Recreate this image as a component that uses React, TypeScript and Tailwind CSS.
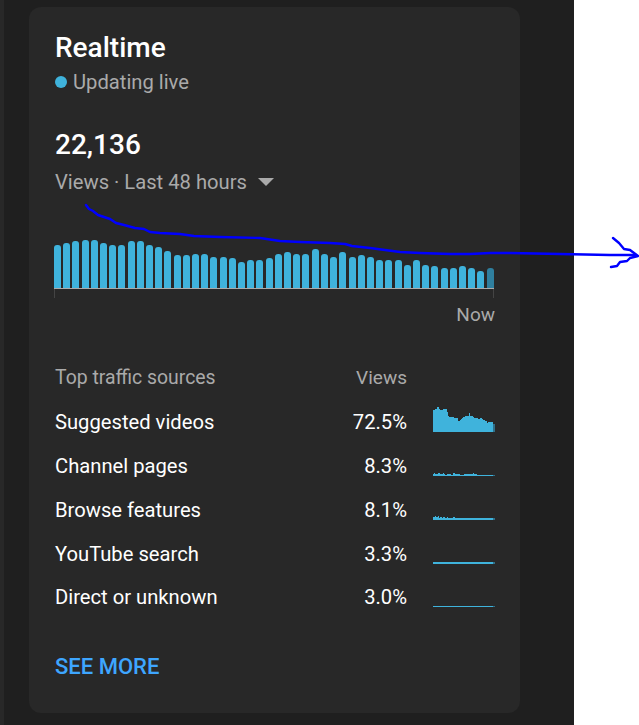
const heights = [43,45,47,48,48,45,43,43,47,47,43,41,37,33,33,34,34,31,31,30,26,28,28,30,34,36,34,34,39,34,31,36,31,33,31,28,28,28,23,28,23,22,20,20,22,20,17,20];

const expand = (runs: [number, number][]) => runs.flatMap(([v, n]) => Array<number>(n).fill(v));

const rows = [
  {
    name: "Suggested videos",
    pct: "72.5%",
    h: 26,
    dim: 8,
    spark: [22,22,23,23,25,25,23,22,22,22,23,23,23,23,20,16,15,15,15,15,15,14,14,14,14,11,11,12,13,14,15,15,16,16,16,16,19,16,16,16,15,14,14,14,14,13,13,14,14,13,12,12,11,11,9,10,10,10,10,10],
  },
  {
    name: "Channel pages",
    pct: "8.3%",
    h: 8,
    dim: 1,
    spark: expand([[2,1],[3,1],[2,3],[3,2],[2,3],[3,1],[2,1],[1,2],[2,4],[1,2],[3,2],[2,5],[1,4],[2,9],[3,1],[2,3],[1,16]]),
  },
  {
    name: "Browse features",
    pct: "8.1%",
    h: 8,
    dim: 2,
    spark: expand([[3,2],[4,1],[3,2],[4,1],[2,1],[3,2],[2,1],[3,2],[2,2],[3,1],[2,5],[3,2],[2,38]]),
  },
  { name: "YouTube search", pct: "3.3%", h: 8, dim: 2, spark: expand([[2,60]]) },
  { name: "Direct or unknown", pct: "3.0%", h: 8, dim: 1, spark: expand([[1,60]]) },
];

function Spark({ data, h, dim }: { data: number[]; h: number; dim: number }) {
  return (
    <svg width="62" height={h} viewBox={`0 0 62 ${h}`} shapeRendering="crispEdges" className="block">
      {data.map((v, i) => (
        <rect key={i} x={i} y={h - v} width="1" height={v} fill="#3fb3dc" />
      ))}
      <rect x="60" y={h - dim} width="2" height={dim} fill="#2f6f88" />
    </svg>
  );
}

export default function App() {
  return (
    <div className="relative w-[639px] h-[725px] overflow-hidden bg-white font-['Roboto',sans-serif]">
      <div className="w-[574px] h-full bg-[#1f1f1f] border-l-4 border-[#282828] pl-[25px] pt-[7px]">
        <div className="w-[491px] h-[706px] rounded-xl bg-[#282828] pl-[26px] pr-[25px] flex flex-col">
          <h1 className="mt-[25px] text-[28px] leading-[32px] font-medium text-white">Realtime</h1>
          <div className="mt-[6px] flex items-center h-[24px]">
            <span className="w-3 h-3 rounded-full bg-[#3fb3dc]" />
            <span className="ml-[6px] text-[20.2px] leading-[24px] text-[#aaaaaa]">Updating live</span>
          </div>
          <div className="mt-[35px] text-[28px] leading-[32px] font-medium text-white">22,136</div>
          <div className="mt-[9px] flex items-center h-[24px] text-[20.2px] leading-[24px] text-[#aaaaaa]">
            <span>Views · Last 48 hours</span>
            <span className="ml-[11px] w-0 h-0 border-x-[8px] border-x-transparent border-t-[8px] border-t-[#aaaaaa]" />
          </div>
          <div className="mt-[44px] -ml-px mr-px h-[50px] flex items-end justify-between border-b border-[#aaaaaa] box-content">
            {heights.map((v, i) => (
              <div
                key={i}
                className={i === 47 ? "w-[7px] rounded-t-[3px] bg-[#2f7f9e]" : "w-[7px] rounded-t-[3px] bg-[#3fb3dc]"}
                style={{ height: v }}
              />
            ))}
          </div>
          <div className="-ml-px mr-px flex justify-between h-[9px]">
            <span className="w-px bg-[#444444]" />
            <span className="w-px bg-[#444444]" />
          </div>
          <div className="mt-[5px] text-right text-[19px] leading-[24px] text-[#aaaaaa]">Now</div>
          <div className="mt-[39px] flex items-center h-[24px] text-[19.4px] leading-[24px] text-[#aaaaaa]">
            <span className="flex-1">Top traffic sources</span>
            <span className="mr-[88px] text-[19px]">Views</span>
          </div>
          <div className="mt-[10px] flex flex-col">
            {rows.map((r, i) => (
              <div key={r.name} className={i === 4 ? "-mt-px flex items-center h-[44px] text-[20.2px] text-white" : "flex items-center h-[44px] text-[20.2px] text-white"}>
                <span className="flex-1">{r.name}</span>
                <span>{r.pct}</span>
                <div className="ml-[26px] w-[62px] flex justify-end flex-col h-[26px] mb-[6px]">
                  <Spark data={r.spark} h={r.h} dim={r.dim} />
                </div>
              </div>
            ))}
          </div>
          <div className="mt-[34px] text-[22px] leading-[28px] font-medium text-[#3ea6ff]">SEE MORE</div>
        </div>
      </div>
      <svg className="absolute left-0 top-0 pointer-events-none" width="639" height="725" fill="none" stroke="#0000ff" strokeWidth="2.4" strokeLinejoin="round" strokeLinecap="round">
        <path d="M86 205 L89 209 L93 211 L98 215 L104 217 L110 219 L116 223 L124 225 L135 228 L144 229 L150 232 L160 233 L180 234 L194 236 L220 237 L260 238 L280 241 L300 242 L330 243 L345 244 L352 246 L370 248 L385 250 L400 252 L420 253 L450 254 L470 254 L490 253 L510 253 L560 254 L610 255 L636 255" />
        <path d="M613 238 L619 243 L624 249 L630 250 L638 256 L630 258 L627 261 L620 262 L617 266 L611 267" />
      </svg>
    </div>
  );
}
